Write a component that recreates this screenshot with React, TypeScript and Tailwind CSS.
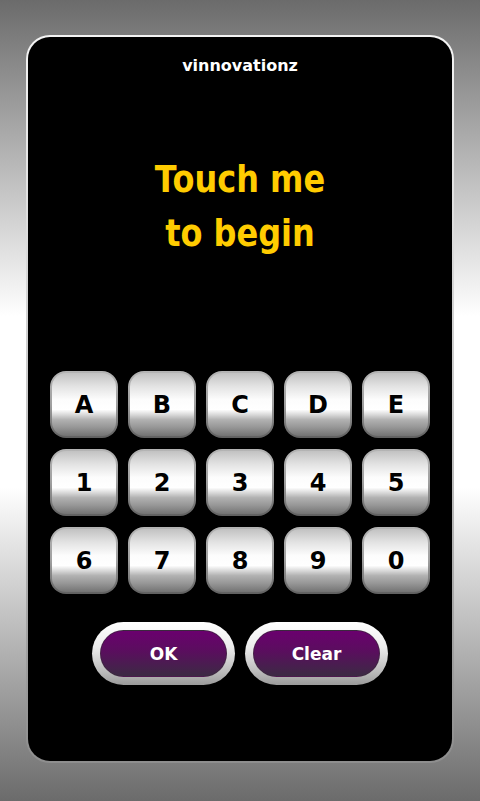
import React from "react";

const keys = ["A", "B", "C", "D", "E", "1", "2", "3", "4", "5", "6", "7", "8", "9", "0"];

function Key({ label }: { label: string }) {
  return (
    <div className="h-[67px] rounded-[16px] p-[2px] bg-[linear-gradient(180deg,#b4b4b4_0%,#a0a0a0_50%,#606060_100%)]">
      <div className="h-full w-full rounded-[14px] flex items-center justify-center bg-[linear-gradient(180deg,#c2c2c2_0%,#e4e4e4_22%,#fcfcfc_42%,#ffffff_58%,#dadada_66%,#b2b2b2_74%,#979797_86%,#737373_100%)]">
        <span className="text-[24px] font-bold text-black leading-none">{label}</span>
      </div>
    </div>
  );
}

function PillButton({ label }: { label: string }) {
  return (
    <div className="w-[143px] h-[63px] rounded-full p-[8px] bg-[linear-gradient(180deg,#ffffff_0%,#ececec_40%,#bababa_80%,#9a9a9a_100%)]">
      <div className="h-full w-full rounded-full border border-[#3a2a3a]/60 flex items-center justify-center bg-[linear-gradient(180deg,#6a006e_0%,#5a0e5e_45%,#3c2a44_100%)]">
        <span className="text-[17px] font-bold text-white leading-none translate-y-[1px]">{label}</span>
      </div>
    </div>
  );
}

export default function App() {
  return (
    <div
      className="w-[480px] h-[801px] pt-[35px] pl-[26px] bg-[linear-gradient(180deg,#6b6b6b_0%,#ffffff_39.5%,#ffffff_60.8%,#6b6b6b_100%)]"
      style={{ fontFamily: '"DejaVu Sans", sans-serif' }}
    >
      <div className="w-[428px] h-[728px] rounded-[24px] p-[2px] bg-[linear-gradient(180deg,#f4f4f4_0%,#c8c8c8_50%,#8e8e8e_100%)]">
        <div className="h-full w-full rounded-[22px] bg-black flex flex-col items-center">
          <div className="pt-[19px] text-[16px] leading-[20px] font-bold text-white">vinnovationz</div>
          <div className="mt-[84px] text-[32px] leading-[47px] font-bold text-[#ffcc00] text-center scale-y-[1.137]">
            <div>Touch me</div>
            <div>to begin</div>
          </div>
          <div className="mt-[117px] grid grid-cols-[repeat(5,68px)] gap-x-[10px] gap-y-[11px]">
            {keys.map((k) => (
              <Key key={k} label={k} />
            ))}
          </div>
          <div className="mt-[28px] flex gap-[10px]">
            <PillButton label="OK" />
            <PillButton label="Clear" />
          </div>
        </div>
      </div>
    </div>
  );
}
